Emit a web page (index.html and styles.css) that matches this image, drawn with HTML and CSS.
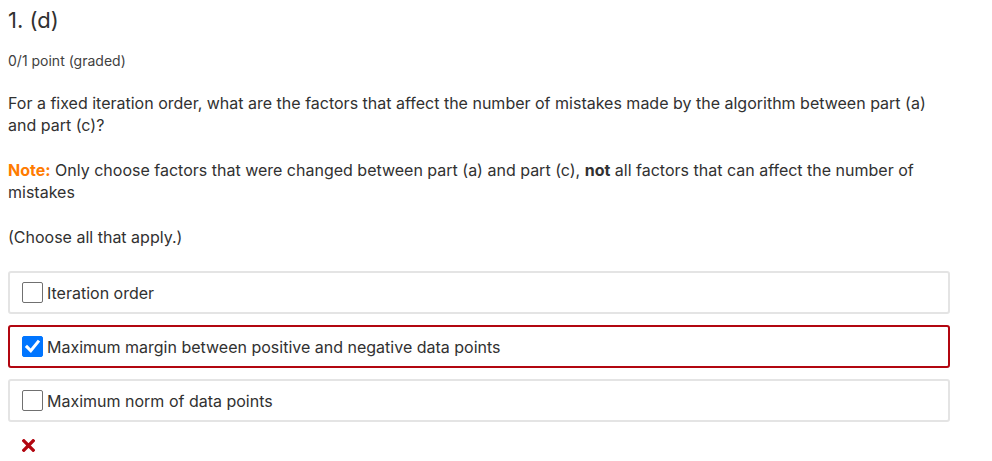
FILE: index.html
```html
<!DOCTYPE html>
<html lang="en">
<head>
  <meta charset="UTF-8" />
  <title>1. (d)</title>
  <link rel="stylesheet" href="styles.css">
</head>
<body>
  <div class="problem">
    <h3 class="problem-title">1. (d)</h3>
    <div class="problem-progress">0/1 point (graded)</div>

    <p>For a fixed iteration order, what are the factors that affect the number of mistakes made by the algorithm between part (a) and part (c)?</p>
    <p><span class="note">Note:</span> Only choose factors that were changed between part (a) and part (c), <strong>not</strong> all factors that can affect the number of mistakes</p>
    <p>(Choose all that apply.)</p>

    <div class="choices">
      <label class="choice">
        <span class="box"></span>
        Iteration order
      </label>
      <label class="choice incorrect">
        <span class="box checked">
          <svg viewBox="0 0 20 20" width="17" height="17"><path d="M3.5 10.5 L8 15 L16.5 4.5" fill="none" stroke="#fff" stroke-width="3.6" stroke-linecap="square" stroke-linejoin="miter"/></svg>
        </span>
        Maximum margin between positive and negative data points
      </label>
      <label class="choice">
        <span class="box"></span>
        Maximum norm of data points
      </label>
    </div>

    <div class="status">
      <svg viewBox="0 0 14 14" width="13" height="13"><path d="M2 2 L12 12 M12 2 L2 12" stroke="#b20610" stroke-width="3.6" stroke-linecap="square"/></svg>
    </div>
  </div>
</body>
</html>
```

FILE: styles.css
```css
body { margin: 0; font-family: Inter, "Noto Sans", sans-serif; color: #313131; background: #fff; }
.problem { padding: 0 42px 0 8px; }
.problem-title { font-size: 22px; font-weight: 400; margin: 0; padding-top: 6px; line-height: 28px; }
.problem-progress { font-size: 14px; color: #414141; margin-top: 19px; line-height: 16px; }
p { font-size: 16px; line-height: 22px; margin: 23px 0; }
.note { color: #ff7b00; font-weight: 700; }
.choices { display: flex; flex-direction: column; gap: 11px; }
.choice { display: flex; align-items: center; gap: 4px; height: 39px; padding: 0 12px; border: 2px solid #e4e4e4; border-radius: 3px; font-size: 16px; }
.choice.incorrect { border-color: #b20610; }
.box { width: 19px; height: 19px; border: 1px solid #707070; border-radius: 2px; display: flex; align-items: center; justify-content: center; }
.box.checked { background: #0075ff; border-color: #0075ff; }
.status { padding: 14px 0 0 14px; }
```
